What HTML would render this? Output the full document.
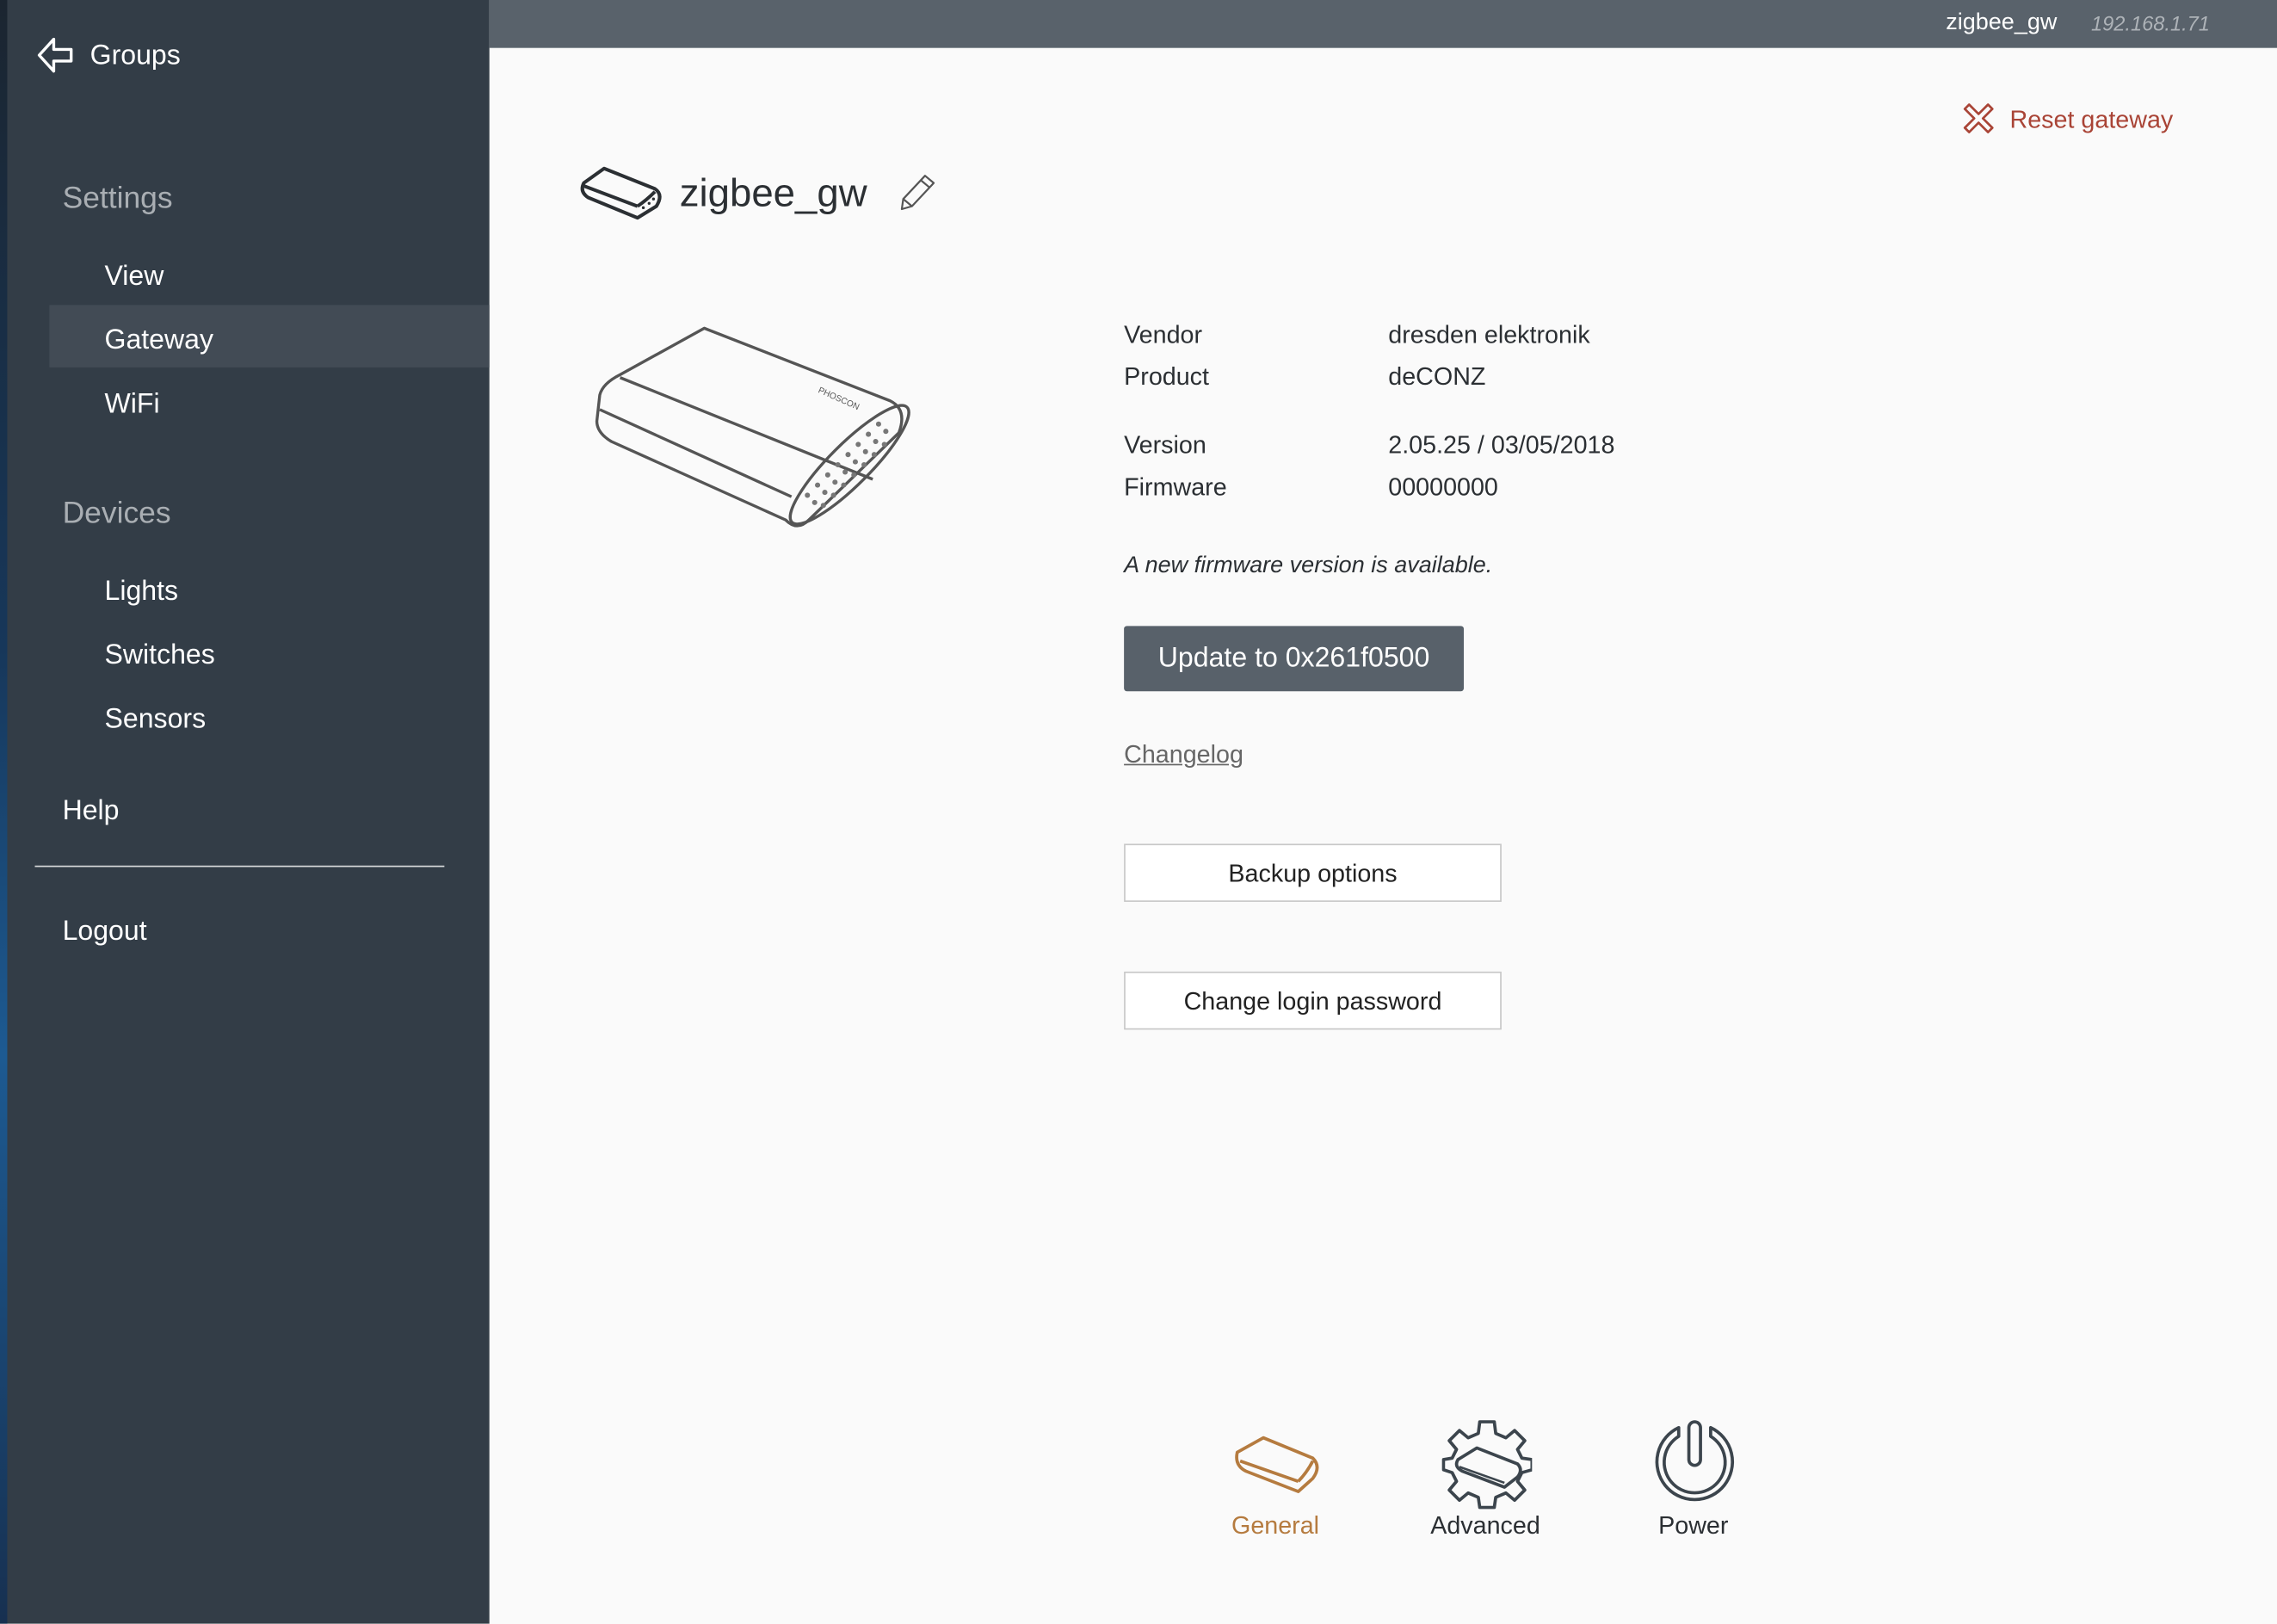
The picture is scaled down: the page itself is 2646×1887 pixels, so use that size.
<!DOCTYPE html>
<html><head><meta charset="utf-8"><style>
html,body{margin:0;padding:0;width:2646px;height:1886px;overflow:hidden;background:#fafafa;}
#w{position:absolute;left:0;top:0;width:1568px;height:1118px;transform:scale(1.6875);transform-origin:0 0;font-family:"Liberation Sans",sans-serif;}
.a{position:absolute;white-space:nowrap;}
#side{position:absolute;left:0;top:0;width:337px;height:1118px;background:#333d47;}
#stripe{position:absolute;left:0;top:0;width:5px;height:1118px;background:linear-gradient(#1b2530,#17375a 40%,#1d5a92 65%,#173050);}
.nav{color:#fff;font-size:19px;}
.hd{color:#a9aeb3;font-size:21px;}
#top{position:absolute;left:337px;top:0;width:1231px;height:33px;background:#59626b;}
.lab{font-size:17px;color:#2b2f33;}
.btn{position:absolute;left:774px;width:258px;height:38px;border:1px solid #c8c8c8;background:#fff;font-size:17px;color:#222;text-align:center;line-height:38px;}
</style></head><body><div id="w">
<div id="side"></div><div id="stripe"></div>
<svg class="a" style="left:25px;top:25px" width="26" height="26" viewBox="0 0 26 26"><path d="M12 2 L2 13 L12 24 L12 17 L24 17 L24 9 L12 9 Z" fill="none" stroke="#fff" stroke-width="2" stroke-linejoin="round"/></svg>
<div class="a nav" style="left:62px;top:28px">Groups</div>
<div class="a hd" style="left:43px;top:125px">Settings</div>
<div class="a nav" style="left:72px;top:180px">View</div>
<div class="a" style="left:34px;top:210px;width:303px;height:43px;background:#424b55"></div>
<div class="a nav" style="left:72px;top:224px">Gateway</div>
<div class="a nav" style="left:72px;top:268px">WiFi</div>
<div class="a hd" style="left:43px;top:342px">Devices</div>
<div class="a nav" style="left:72px;top:397px">Lights</div>
<div class="a nav" style="left:72px;top:441px">Switches</div>
<div class="a nav" style="left:72px;top:485px">Sensors</div>
<div class="a nav" style="left:43px;top:548px">Help</div>
<div class="a" style="left:24px;top:596px;width:282px;height:1px;background:#d8dadc"></div>
<div class="a nav" style="left:43px;top:631px">Logout</div>
<div id="top"></div>
<div class="a" style="left:1340px;top:7px;color:#fff;font-size:16px">zigbee_gw</div>
<div class="a" style="left:1440px;top:8px;color:#aeb3b8;font-size:14px;font-style:italic">192.168.1.71</div>
<svg class="a" style="left:1352px;top:71px" width="21" height="21" viewBox="0 0 21 21"><path d="M4 1 L10.5 7.5 L17 1 L20 4 L13.5 10.5 L20 17 L17 20 L10.5 13.5 L4 20 L1 17 L7.5 10.5 L1 4 Z" fill="none" stroke="#a94436" stroke-width="1.6" stroke-linejoin="round"/></svg>
<div class="a" style="left:1384px;top:73px;color:#a94436;font-size:17px">Reset gateway</div>
<svg class="a" style="left:399px;top:112px" width="60" height="42" viewBox="0 0 60 42"><g fill="none" stroke="#2b2f33" stroke-width="2.4" stroke-linejoin="round"><path d="M3 14 L17 4 L52 18 Q58 22 53 30 L40 38 L6 24 Q0 20 3 14Z"/><path d="M3 16 L40 30 M40 30 Q46 26 52 20"/></g><g fill="#2b2f33"><circle cx="44" cy="31" r="1"/><circle cx="48" cy="28" r="1"/><circle cx="51" cy="25" r="1"/></g></svg>
<div class="a" style="left:468px;top:118px;color:#2b2f33;font-size:27px">zigbee_gw</div>
<svg class="a" style="left:618px;top:118px" width="28" height="28" viewBox="0 0 28 28"><path d="M19 3 L25 8 L10 24 L3 26 L4 19 Z M16 6 L22 11 M4 19 L10 24" fill="none" stroke="#555" stroke-width="1.3" stroke-linejoin="round"/></svg>
<svg class="a" style="left:405px;top:220px" width="225" height="150" viewBox="0 0 225 150"><g fill="none" stroke="#555" stroke-width="2" stroke-linejoin="round"><path d="M80 6 L208 56 Q220 62 214 78 L152 138 Q144 146 136 138 L16 84 Q6 78 6 70 L8 52 Q10 44 22 38 Z"/><path d="M22 40 L196 110 M8 62 L140 122"/><ellipse cx="180" cy="100" rx="56" ry="14" transform="rotate(-45 180 100)"/></g><g fill="#777"><circle cx="156" cy="126" r="1.8"/><circle cx="163" cy="119" r="1.8"/><circle cx="170" cy="112" r="1.8"/><circle cx="177" cy="105" r="1.8"/><circle cx="184" cy="98" r="1.8"/><circle cx="191" cy="91" r="1.8"/><circle cx="198" cy="84" r="1.8"/><circle cx="205" cy="77" r="1.8"/><circle cx="162" cy="128" r="1.8"/><circle cx="169" cy="121" r="1.8"/><circle cx="176" cy="114" r="1.8"/><circle cx="183" cy="107" r="1.8"/><circle cx="190" cy="100" r="1.8"/><circle cx="197" cy="93" r="1.8"/><circle cx="204" cy="86" r="1.8"/><circle cx="151" cy="121" r="1.8"/><circle cx="158" cy="114" r="1.8"/><circle cx="165" cy="107" r="1.8"/><circle cx="172" cy="100" r="1.8"/><circle cx="179" cy="93" r="1.8"/><circle cx="186" cy="86" r="1.8"/><circle cx="193" cy="79" r="1.8"/><circle cx="200" cy="72" r="1.8"/></g><text x="158" y="50" font-size="6" fill="#555" transform="rotate(24 158 50)" font-family="Liberation Sans">PHOSCON</text></svg>
<div class="a lab" style="left:774px;top:221px">Vendor</div><div class="a lab" style="left:956px;top:221px">dresden elektronik</div>
<div class="a lab" style="left:774px;top:250px">Product</div><div class="a lab" style="left:956px;top:250px">deCONZ</div>
<div class="a lab" style="left:774px;top:297px">Version</div><div class="a lab" style="left:956px;top:297px">2.05.25 / 03/05/2018</div>
<div class="a lab" style="left:774px;top:326px">Firmware</div><div class="a lab" style="left:956px;top:326px">00000000</div>
<div class="a lab" style="left:774px;top:381px;font-style:italic;font-size:16px">A new firmware version is available.</div>
<div class="a" style="left:774px;top:431px;width:234px;height:45px;background:#58616a;border-radius:2px;color:#fff;font-size:19px;text-align:center;line-height:46px">Update to 0x261f0500</div>
<div class="a" style="left:774px;top:510px;color:#666;font-size:17px;text-decoration:underline">Changelog</div>
<div class="btn" style="top:581px;line-height:40px">Backup options</div>
<div class="btn" style="top:669px;line-height:40px">Change login password</div>
<svg class="a" style="left:848px;top:986px" width="62" height="44" viewBox="0 0 62 44"><g fill="none" stroke="#b57b3f" stroke-width="2.2" stroke-linejoin="round"><path d="M4 14 L22 4 L56 18 Q62 24 56 32 L46 41 L10 27 Q2 23 4 14Z"/><path d="M6 20 L46 34 M46 34 Q52 28 56 20"/></g></svg>
<div class="a" style="left:848px;top:1041px;color:#b57b3f;font-size:17px">General</div>
<svg class="a" style="left:993px;top:977px" width="62" height="62" viewBox="0 0 62 62"><path d="M26 2 L36 2 L37 10 L44 13 L50 8 L57 15 L52 21 L55 27 L62 28 L62 35 L55 37 L52 43 L57 49 L50 56 L44 51 L37 54 L36 61 L26 61 L25 54 L18 51 L12 56 L5 49 L10 43 L7 37 L1 35 L1 28 L7 27 L10 21 L5 15 L12 8 L18 13 L25 10 Z" fill="none" stroke="#3c454d" stroke-width="2.2" stroke-linejoin="round"/><g fill="#fafafa" stroke="#3c454d" stroke-width="2.2" stroke-linejoin="round"><path d="M11 28 L24 20 L52 31 Q56 35 52 40 L43 47 L14 36 Q8 33 11 28Z"/></g><path d="M12 33 L43 44" stroke="#3c454d" stroke-width="1.5"/></svg>
<div class="a" style="left:985px;top:1041px;color:#2b2f33;font-size:17px">Advanced</div>
<svg class="a" style="left:1137px;top:977px" width="60" height="62" viewBox="0 0 60 62"><path d="M19 6 A26 26 0 1 0 41 6 L41 12 A21 21 0 1 1 19 12 Z" fill="none" stroke="#3c454d" stroke-width="2.2" stroke-linejoin="round"/><rect x="26" y="2" width="8" height="30" rx="4" fill="none" stroke="#3c454d" stroke-width="2.2"/></svg>
<div class="a" style="left:1142px;top:1041px;color:#2b2f33;font-size:17px">Power</div>
</div></body></html>
